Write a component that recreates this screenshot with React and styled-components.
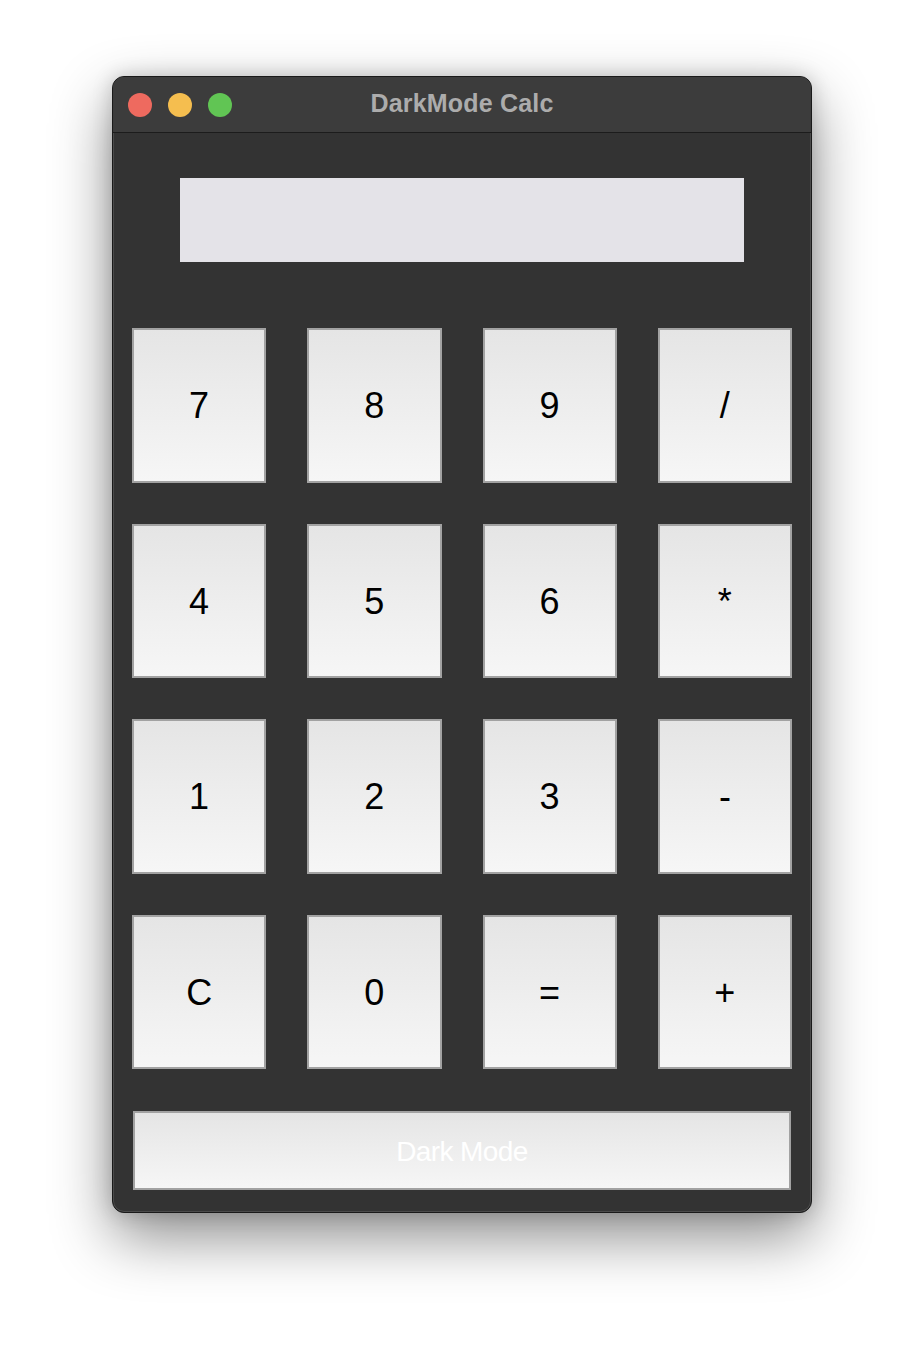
import React, { useState } from 'react';
import styled, { createGlobalStyle } from 'styled-components';

const GlobalStyle = createGlobalStyle`
  * { box-sizing: border-box; }
  body {
    margin: 0;
    background: #ffffff;
    font-family: "Liberation Sans", Arial, Helvetica, sans-serif;
  }
`;

const PAGE = styled.div`
  min-height: 1360px;
  display: flex;
  justify-content: center;
  align-items: flex-start;
  padding-top: 76px;
`;

const WINDOW = styled.div`
  width: 700px;
  border: 1px solid #1a1a1a;
  border-radius: 12px;
  overflow: hidden;
  background: #333333;
  box-shadow: inset 0 0 0 1px rgba(255, 255, 255, 0.12),
    0 24px 60px rgba(0, 0, 0, 0.45), 0 0 20px rgba(0, 0, 0, 0.18);
`;

const TITLEBAR = styled.div`
  height: 56px;
  display: grid;
  grid-template-columns: 1fr auto 1fr;
  align-items: center;
  padding: 0 15px;
  background: #3c3c3c;
  border-bottom: 1px solid #1c1c1c;
  .lights {
    display: flex;
    gap: 16px;
  }
  h1 {
    margin: 0 0 2px;
    font-size: 25px;
    font-weight: 700;
    color: #acacac;
    letter-spacing: 0.2px;
  }
`;

const LIGHT = styled.span`
  width: 24px;
  height: 24px;
  border-radius: 50%;
  background: ${(p) => p.$color};
`;

const BODY = styled.div`
  padding: 45px 19px 22px 19px;
  display: flex;
  flex-direction: column;
  align-items: center;
`;

const DISPLAY = styled.div`
  width: 564px;
  height: 84px;
  background: #e4e3e8;
  margin-bottom: 66px;
  font-size: 36px;
  text-align: right;
  padding: 20px 16px;
  color: #111;
`;

const KEYPAD = styled.div`
  width: 100%;
  display: grid;
  grid-template-columns: repeat(4, 1fr);
  grid-auto-rows: 154.5px;
  gap: 41px;
`;

const KEY = styled.button`
  border: 2px solid #a2a2a2;
  border-radius: 0;
  background: linear-gradient(180deg, #e5e5e5 0%, #f6f6f6 100%);
  color: #000;
  font-family: "Liberation Sans", Arial, Helvetica, sans-serif;
  font-size: 36px;
  padding: 2px 0 0;
  cursor: pointer;
`;

const TOGGLE = styled.button`
  width: calc(100% - 2px);
  height: 79px;
  margin-top: 42px;
  border: 2px solid #a2a2a2;
  border-radius: 0;
  background: linear-gradient(180deg, #e5e5e5 0%, #f6f6f6 100%);
  color: #ffffff;
  font-family: "Liberation Sans", Arial, Helvetica, sans-serif;
  font-size: 28px;
  letter-spacing: -0.6px;
  padding: 3px 0 0;
  cursor: pointer;
`;

const KEYS = ['7', '8', '9', '/', '4', '5', '6', '*', '1', '2', '3', '-', 'C', '0', '=', '+'];

const App = () => {
  const [value, setValue] = useState('');

  const press = (k) => {
    if (k === 'C') return setValue('');
    if (k === '=') {
      try {
        // only digits and operators ever reach here
        // eslint-disable-next-line no-new-func
        setValue(String(Function(`return (${value})`)()));
      } catch (e) {
        setValue('');
      }
      return;
    }
    setValue(value + k);
  };

  return (
    <PAGE>
      <GlobalStyle />
      <WINDOW>
        <TITLEBAR>
          <div className="lights">
            <LIGHT $color="#ee6a5f" />
            <LIGHT $color="#f5be4f" />
            <LIGHT $color="#61c554" />
          </div>
          <h1>DarkMode Calc</h1>
          <div />
        </TITLEBAR>
        <BODY>
          <DISPLAY>{value}</DISPLAY>
          <KEYPAD>
            {KEYS.map((k) => (
              <KEY key={k} onClick={() => press(k)}>{k}</KEY>
            ))}
          </KEYPAD>
          <TOGGLE>Dark Mode</TOGGLE>
        </BODY>
      </WINDOW>
    </PAGE>
  );
};

export default App;
